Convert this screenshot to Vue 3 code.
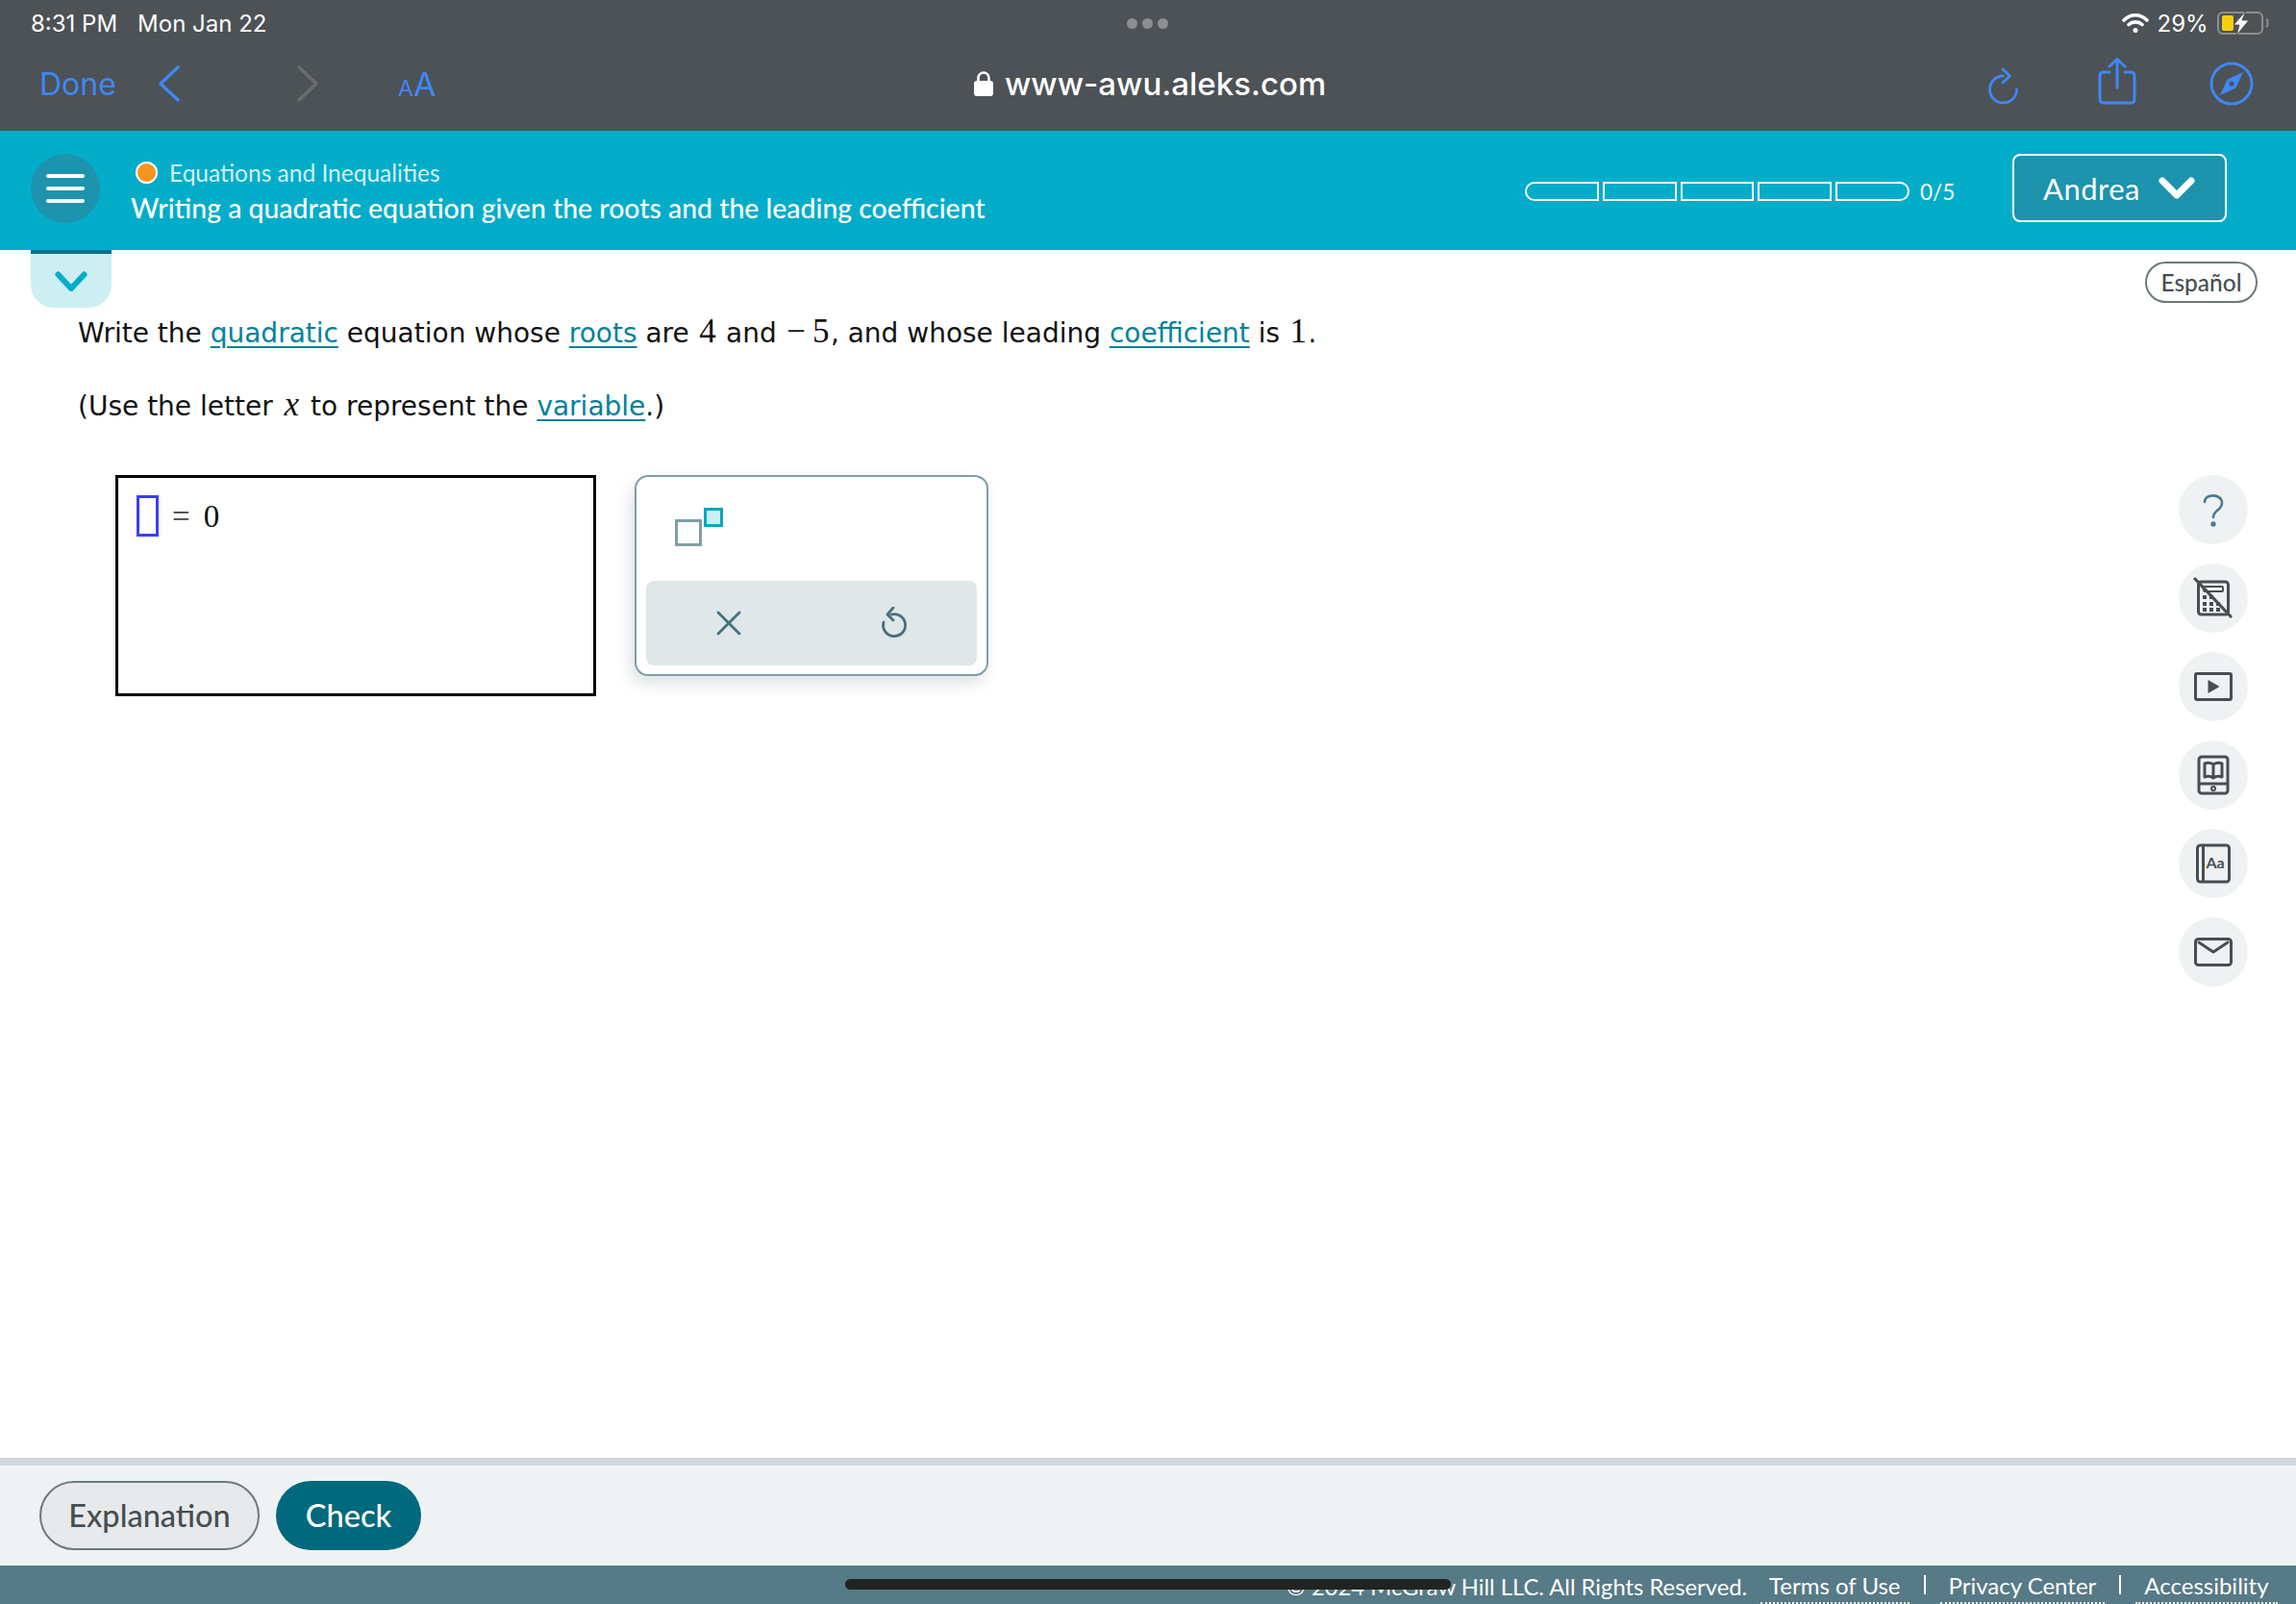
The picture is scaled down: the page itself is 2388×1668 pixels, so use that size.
<script setup>
const segments = [1, 2, 3, 4, 5]
</script>

<template>
  <div class="page">
    <div class="chrome">
      <div class="status">
        <span class="time">8:31 PM</span>
        <span class="date">Mon Jan 22</span>
        <span class="dots"><i></i><i></i><i></i></span>
        <svg class="wifi" width="28" height="22" viewBox="0 0 28 22" fill="none" stroke="#fff" stroke-width="3.6" stroke-linecap="round">
          <path d="M2 8 C9 1 19 1 26 8" />
          <path d="M7 12.5 C11 9 17 9 21 12.5" />
          <path d="M14 18.5 L14 18.6" stroke-width="5" />
        </svg>
        <span class="pct">29%</span>
        <svg class="battery" width="55" height="26" viewBox="0 0 55 26" fill="none">
          <rect x="1" y="2" width="46" height="22" rx="5" stroke="#8b8f92" stroke-width="2" />
          <rect x="5" y="5" width="12" height="16" rx="2" fill="#f5cf0e" />
          <path d="M51 9 C53 10 53 16 51 17" stroke="#8b8f92" stroke-width="2" />
          <path d="M30 0 L17 15 H23 L20 26 L33 10 H26 Z" fill="#fff" stroke="#4c5256" stroke-width="1" />
        </svg>
      </div>
      <div class="toolbar">
        <span class="done">Done</span>
        <svg class="back" width="24" height="38" viewBox="0 0 24 38" fill="none" stroke="#3f87f5" stroke-width="3.4" stroke-linecap="round" stroke-linejoin="round"><path d="M21 2 L3 19 L21 36" /></svg>
        <svg class="forward" width="24" height="38" viewBox="0 0 24 38" fill="none" stroke="#686d70" stroke-width="3.4" stroke-linecap="round" stroke-linejoin="round"><path d="M3 2 L21 19 L3 36" /></svg>
        <span class="aa"><small>A</small>A</span>
        <div class="url">
          <svg class="lock" width="20" height="26" viewBox="0 0 20 26" fill="#fff"><rect x="0" y="10" width="20" height="16" rx="3" /><path d="M4.5 11 V7 a5.500 5.500 0 0 1 11 0 V11" fill="none" stroke="#fff" stroke-width="2.600" /></svg>
          <span>www-awu.aleks.com</span>
        </div>
        <svg class="reload" width="32" height="38" viewBox="0 0 32 38" fill="none" stroke="#3f87f5" stroke-width="2.800" stroke-linecap="round" stroke-linejoin="round">
          <path d="M15.500 9 A14 14 0 1 0 29.500 23" />
          <path d="M15 2 L22.500 9 L15 16" />
        </svg>
        <svg class="share" width="40" height="50" viewBox="0 0 40 50" fill="none" stroke="#3f87f5" stroke-width="3" stroke-linecap="round" stroke-linejoin="round">
          <path d="M12 15 H6 Q2 15 2 19 V43 Q2 47 6 47 H34 Q38 47 38 43 V19 Q38 15 34 15 H28" />
          <path d="M20 31 V2 M12 9 L20 1.500 L28 9" />
        </svg>
        <svg class="compass" width="46" height="46" viewBox="0 0 46 46" fill="none">
          <circle cx="23" cy="23" r="21" stroke="#3f87f5" stroke-width="3" />
          <path d="M35 11 L27.500 27.500 L18.500 18.500 Z" fill="#3f87f5" />
          <path d="M11 35 L18.500 18.500 L27.500 27.500 Z" fill="#3f87f5" />
          <circle cx="23" cy="23" r="2.500" fill="#4c5256" />
        </svg>
      </div>
    </div>

    <header class="topic">
      <button class="menu"><i></i><i></i><i></i></button>
      <div class="titles">
        <div class="crumb"><span class="dot"></span>Equations and Inequalities</div>
        <div class="title">Writing a quadratic equation given the roots and the leading coefficient</div>
      </div>
      <div class="progress">
        <span v-for="s in segments" :key="s" class="seg"></span>
      </div>
      <span class="count">0/5</span>
      <button class="user">
        <span>Andrea</span>
        <svg width="38" height="24" viewBox="0 0 38 24" fill="none" stroke="#fff" stroke-width="7" stroke-linecap="round" stroke-linejoin="round"><path d="M4 4 L19 19 L34 4" /></svg>
      </button>
    </header>

    <main class="work">
      <div class="tab">
        <svg width="34" height="22" viewBox="0 0 34 22" fill="none" stroke="#03adc9" stroke-width="6" stroke-linecap="round" stroke-linejoin="round"><path d="M3.500 3.500 L17 18 L30.500 3.500" /></svg>
      </div>
      <section class="question">
        <p class="line first">Write the <a>quadratic</a> equation whose <a>roots</a> are <span class="m">4</span> and <span class="m"><span class="minus">&#8722;</span>5</span>, and whose leading <a>coefficient</a> is <span class="m">1</span>.</p>
        <p class="line second">(Use the letter <em class="m var">x</em> to represent the <a>variable</a>.)</p>
        <div class="answer-row">
          <div class="answer">
            <span class="slot"></span>
            <span class="eq">=</span>
            <span class="zero">0</span>
          </div>
          <div class="keypad">
            <div class="keys">
              <span class="base"></span><span class="sup"></span>
            </div>
            <div class="actions">
              <svg width="28" height="28" viewBox="0 0 28 28" fill="none" stroke="#44707e" stroke-width="2.800" stroke-linecap="round"><path d="M3 3 L25 25 M25 3 L3 25" /></svg>
              <svg width="30" height="34" viewBox="0 0 30 34" fill="none" stroke="#44707e" stroke-width="2.800" stroke-linecap="round" stroke-linejoin="round">
                <path d="M13 8 A11.500 11.500 0 1 1 5 16" />
                <path d="M15 1 L9 8 L15 14" />
              </svg>
            </div>
          </div>
        </div>
      </section>
      <aside class="rail">
        <span class="lang">Español</span>
        <div class="tools">
          <span class="tool">
            <svg width="48" height="48" viewBox="0 0 48 48" fill="none" stroke="#4a7d92" stroke-width="2.600" stroke-linecap="round"><path d="M15 16 C15 7 33 7 33 17 C33 25 24 24 24 32" /><circle cx="24" cy="39" r="1.400" fill="#4a7d92" /></svg>
          </span>
          <span class="tool">
            <svg width="48" height="48" viewBox="0 0 48 48" fill="none" stroke="#474f50" stroke-width="3" stroke-linecap="round" stroke-linejoin="round">
              <rect x="8.500" y="7" width="31" height="34" rx="3" />
              <rect x="14" y="12" width="20" height="5" rx="1" stroke-width="2" />
              <path d="M5 4 L42 43" stroke-width="3.200" />
              <g fill="#474f50" stroke="none"><rect x="13" y="21" width="4" height="4" /><rect x="20" y="21" width="4" height="4" /><rect x="13" y="28" width="4" height="4" /><rect x="20" y="28" width="4" height="4" /><rect x="27" y="28" width="4" height="4" /><rect x="13" y="34" width="4" height="4" /><rect x="20" y="34" width="4" height="4" /><rect x="27" y="34" width="4" height="4" /></g>
            </svg>
          </span>
          <span class="tool">
            <svg width="48" height="48" viewBox="0 0 48 48" fill="none" stroke="#474f50" stroke-width="3" stroke-linejoin="round">
              <rect x="5.500" y="10.500" width="37" height="27" rx="1.500" />
              <path d="M18.500 17 L30.500 24 L18.500 31 Z" fill="#474f50" stroke="none" />
            </svg>
          </span>
          <span class="tool">
            <svg width="48" height="48" viewBox="0 0 48 48" fill="none" stroke="#474f50" stroke-width="3" stroke-linejoin="round">
              <rect x="9" y="5" width="30" height="38" rx="3" />
              <path d="M9 33 H39" />
              <path d="M24 13 C21 11 18 11 15 12 V26 C18 25 21 25 24 27 C27 25 30 25 33 26 V12 C30 11 27 11 24 13 Z M24 13 V27" />
              <circle cx="24" cy="38" r="2" stroke-width="2" />
            </svg>
          </span>
          <span class="tool">
            <svg width="48" height="48" viewBox="0 0 48 48" fill="none" stroke="#474f50" stroke-width="3" stroke-linejoin="round">
              <rect x="7.500" y="5" width="33" height="38" rx="3" />
              <path d="M13.500 5 V43" />
              <text x="16.500" y="29" class="aa-glyph">Aa</text>
            </svg>
          </span>
          <span class="tool">
            <svg width="48" height="48" viewBox="0 0 48 48" fill="none" stroke="#474f50" stroke-width="3" stroke-linejoin="round" stroke-linecap="round">
              <rect x="5.500" y="10.500" width="37" height="27" rx="3" />
              <path d="M9 14 L24 24 L39 14" />
            </svg>
          </span>
        </div>
      </aside>
    </main>

    <div class="actionbar">
      <button class="btn explain">Explanation</button>
      <button class="btn check">Check</button>
    </div>

    <footer class="legal">
      <span class="copy">© 2024 McGraw Hill LLC. All Rights Reserved.</span>
      <a>Terms of Use</a>
      <span class="sep"></span>
      <a>Privacy Center</a>
      <span class="sep"></span>
      <a>Accessibility</a>
      <span class="home"></span>
    </footer>
  </div>
</template>

<style scoped>
.page { width: 2388px; height: 1668px; display: flex; flex-direction: column; overflow: hidden; background: #fff; font-family: Lato, "Open Sans", sans-serif; }
button { font-family: inherit; cursor: pointer; }

.chrome { height: 136px; background: #4c5256; color: #fff; font-family: Inter, sans-serif; flex: none; }
.status { height: 48px; display: flex; align-items: center; font-size: 24px; padding-left: 32px; }
.date { margin-left: 21px; }
.dots { display: flex; gap: 5px; margin-left: 894px; width: 43px; }
.dots i { width: 11px; height: 11px; border-radius: 50%; background: #8b8f92; }
.wifi { margin-left: 992px; }
.pct { margin-left: 9px; font-size: 24px; }
.battery { margin-left: 9px; }

.toolbar { height: 88px; display: flex; align-items: center; padding-left: 41px; color: #3f87f5; padding-bottom: 10px; box-sizing: border-box; }
.done { font-size: 32px; width: 79px; }
.back { margin-left: 44px; }
.forward { margin-left: 120px; }
.aa { margin-left: 82px; width: 42px; font-size: 34px; white-space: nowrap; }
.aa small { font-size: 23px; }
.url { margin-left: 557px; width: 364px; display: flex; align-items: center; gap: 12px; color: #fff; font-size: 33px; font-weight: 500; white-space: nowrap; }
.lock { flex: none; }
.reload { margin-left: 691px; margin-top: 4px; }
.share { margin-left: 82px; margin-top: -4px; }
.compass { margin-left: 76px; }

.topic { height: 124px; background: #03adc9; display: flex; align-items: center; padding-left: 32px; flex: none; color: #fff; }
.menu { width: 72px; height: 72px; border: 0; border-radius: 50%; background: #1d93ad; display: flex; flex-direction: column; align-items: center; justify-content: center; gap: 9px; padding: 0; margin-bottom: 4px; }
.menu i { width: 40px; height: 4px; background: #fff; border-radius: 2px; }
.titles { margin-left: 32px; width: 914px; margin-top: -2px; }
.crumb { display: flex; align-items: center; font-size: 24.500px; color: #d4f0f5; height: 38px; padding-left: 5px; }
.dot { width: 23px; height: 23px; box-sizing: border-box; border-radius: 50%; background: #f79420; border: 2px solid #fff; margin-right: 12px; }
.title { font-size: 28.400px; font-weight: 500; height: 36px; line-height: 36px; white-space: nowrap; }
.progress { margin-left: 536px; width: 400px; display: flex; gap: 4px; margin-top: 2px; }
.seg { flex: 1; height: 20px; box-sizing: border-box; border: 2px solid #fff; }
.seg:first-child { border-radius: 10px 0 0 10px; }
.seg:last-child { border-radius: 0 10px 10px 0; }
.count { margin-left: 11px; width: 96px; font-size: 22.500px; margin-top: 2px; }
.user { width: 223px; height: 71px; box-sizing: border-box; background: #1d93ad; border: 2px solid #fff; border-radius: 8px; color: #fff; font-size: 31px; display: flex; align-items: center; padding: 0 0 0 30px; gap: 19px; letter-spacing: 0.500px; margin-bottom: 5px; }

.work { flex: 1; display: flex; position: relative; min-height: 0; }
.tab { position: absolute; left: 32px; top: 0; width: 84px; height: 60px; box-sizing: border-box; border-top: 4px solid #00708a; background: #cdeef3; border-radius: 0 0 24px 24px; display: flex; align-items: center; justify-content: center; padding-top: 2px; }
.question { flex: 1; padding: 63px 0 0 81px; min-width: 0; }
.line { margin: 0; font-family: "DejaVu Sans", Verdana, sans-serif; font-size: 28px; color: #111; height: 44px; line-height: 44px; white-space: nowrap; }
.second { margin-top: 32px; }
.line a { color: #00829b; text-decoration: underline; text-decoration-thickness: 2px; text-underline-offset: 4px; }
.m { font-family: "Liberation Serif", serif; font-size: 35px; margin: 0 1.500px; }
.var { margin: 0 3px; }
.minus { margin-right: 7px; }
em.m { font-style: italic; }
.answer-row { display: flex; align-items: flex-start; gap: 40px; margin: 51px 0 0 39px; }
.answer { width: 500px; height: 230px; box-sizing: border-box; border: 3px solid #000; display: flex; align-items: flex-start; padding: 18px 0 0 19px; font-family: "Liberation Serif", serif; font-size: 33px; color: #111; }
.slot { width: 23px; height: 43px; box-sizing: border-box; border: 3px solid #3c3cff; }
.eq { margin-left: 14px; line-height: 44px; color: #444; }
.zero { margin-left: 14px; line-height: 44px; }
.keypad { width: 368px; height: 209px; box-sizing: border-box; border: 2px solid #7f9ea6; border-radius: 14px; background: #fff; box-shadow: -4px 8px 16px rgba(70, 100, 110, 0.18); padding: 0 10px; }
.keys { height: 108px; position: relative; }
.base { position: absolute; left: 30px; top: 44px; width: 28px; height: 28px; box-sizing: border-box; border: 3px solid #7f9ea6; }
.sup { position: absolute; left: 60px; top: 32px; width: 20px; height: 20px; box-sizing: border-box; border: 3px solid #0ba6bf; background: #cdeef3; }
.actions { height: 88px; background: #dfe7e9; border-radius: 8px; display: flex; align-items: center; padding-left: 72px; gap: 142px; }

.rail { width: 160px; flex: none; display: flex; flex-direction: column; align-items: flex-end; padding: 12px 40px 0 0; box-sizing: border-box; }
.lang { width: 117px; height: 43px; box-sizing: border-box; border: 2px solid #6c7a7a; border-radius: 22px; display: flex; align-items: center; justify-content: center; font-size: 24.500px; font-weight: 500; color: #474f50; }
.tools { margin: 179px 10px 0 0; display: flex; flex-direction: column; gap: 20px; }
.tool { width: 72px; height: 72px; border-radius: 50%; background: #eff2f2; display: flex; align-items: center; justify-content: center; }
.aa-glyph { font-family: Lato, sans-serif; font-size: 16px; font-weight: 700; fill: #474f50; stroke: none; }

.actionbar { height: 112px; flex: none; box-sizing: border-box; background: #eef2f3; border-top: 8px solid #d0d9dd; display: flex; align-items: center; padding-left: 41px; gap: 17px; }
.btn { height: 72px; border-radius: 36px; font-size: 32.500px; font-weight: 500; padding: 0 0 2px; }
.explain { width: 229px; background: #e6eaeb; border: 2px solid #6c7a7a; color: #474f50; }
.check { width: 151px; background: #00697d; border: 0; color: #fff; }

.legal { height: 40px; flex: none; background: #567a86; color: #fff; position: relative; display: flex; align-items: flex-start; padding-left: 1338px; font-size: 24px; white-space: nowrap; }
.copy { margin-top: 8px; width: 493px; font-size: 23.800px; }
.legal a { margin-top: 4px; height: 36px; line-height: 33px; border-bottom: 2px dotted #fff; padding: 0 9px; box-sizing: border-box; }
.sep { width: 2px; height: 20px; background: #fff; margin: 10px 15px 0; }
.home { position: absolute; left: 879px; top: 14px; width: 630px; height: 11px; border-radius: 6px; background: #222; }
</style>
